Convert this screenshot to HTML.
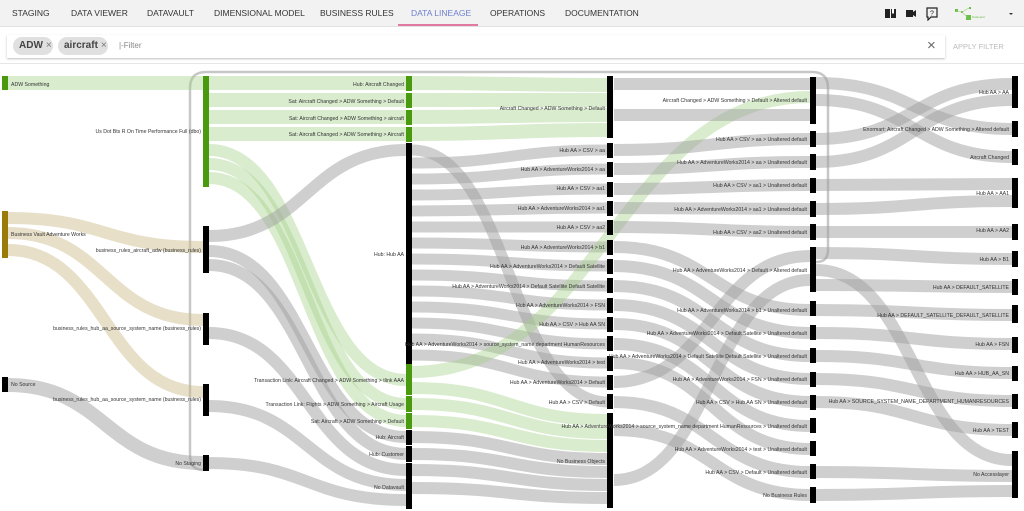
<!DOCTYPE html>
<html><head><meta charset="utf-8"><style>
body{margin:0;width:1024px;height:511px;overflow:hidden;background:#fff;font-family:"Liberation Sans",sans-serif;position:relative}
.nav{position:absolute;left:0;top:0;width:1024px;height:26px;background:#f2f2f2;border-bottom:1px solid #e2e2e2}
.nav span{position:absolute;top:8px;font-size:8.5px;color:#333;letter-spacing:0}
.fb{position:absolute;left:7px;top:35px;width:938px;height:23px;background:#fff;box-shadow:0 1px 2px rgba(0,0,0,.25)}
.chip{position:absolute;top:2px;height:18px;border-radius:9px;background:#e0e0e0;font-size:10px;font-weight:bold;color:#444;line-height:18px;padding-left:6px}
.chip i{font-style:normal;font-weight:normal;color:#777;margin-left:3px}
svg text{font-family:"Liberation Sans",sans-serif;font-size:5.2px;fill:#333}
.g{fill:none;stroke:#9f9f9f;stroke-opacity:.5}
.gr{fill:none;stroke:#9fd084;stroke-opacity:.4}
.ol{fill:none;stroke:#c9b884;stroke-opacity:.45}
</style></head><body>
<div class="nav">
<span style="left:12px">STAGING</span><span style="left:71px">DATA VIEWER</span><span style="left:147px">DATAVAULT</span><span style="left:214px">DIMENSIONAL MODEL</span><span style="left:320px">BUSINESS RULES</span><span style="left:411px;color:#6f7fcf">DATA LINEAGE</span><span style="left:490px">OPERATIONS</span><span style="left:565px">DOCUMENTATION</span>
<div style="position:absolute;left:398px;top:24px;width:80px;height:2px;background:#e07aa0"></div>
<svg style="position:absolute;left:884px;top:7px" width="130" height="14">
<path d="M1 2h5v9H1zM7 2h5v9H7z" fill="#222"/><path d="M8 1l2 0 0 6-1-1-1 1z" fill="#fff"/>
<rect x="22" y="3" width="7" height="7" fill="#222"/><path d="M29 5l3-2v7l-3-2z" fill="#222"/>
<path d="M43 1h10v9h-6l-3 3v-3h-1z" fill="none" stroke="#222" stroke-width="1.2"/><text x="46" y="8.5" style="font-size:7px;fill:#222">?</text>
<g fill="#6cc04a"><rect x="71" y="2" width="3" height="3"/><rect x="77" y="4" width="2" height="2"/><rect x="85" y="0" width="2" height="2"/><rect x="82" y="8" width="5" height="5"/></g>
<path d="M72 4l6 1 7-4M78 5l5 5" stroke="#9fd084" stroke-width=".6" fill="none"/>
<text x="88" y="11" style="font-size:3px;fill:#6cc04a">Datavault</text>
<path d="M125 6h4l-2 2z" fill="#333"/>
</svg>
</div>
<div class="fb">
<div class="chip" style="left:6px;width:34px">ADW<i>×</i></div>
<div class="chip" style="left:51px;width:44px">aircraft<i>×</i></div>
<span style="position:absolute;left:112px;top:6px;font-size:8px;color:#888">|-Filter</span>
<span style="position:absolute;left:920px;top:2px;font-size:15px;color:#666">×</span>
</div>
<span style="position:absolute;left:953px;top:42px;font-size:7.5px;color:#bbb">APPLY FILTER</span>
<div style="position:absolute;left:0;top:63px;width:1024px;height:1px;background:#e6e6e6"></div>
<svg style="position:absolute;left:0;top:0" width="1024" height="511">
<path d="M203 470 Q190 470 190 455 L190 88 Q190 72 206 72 L812 72 Q828 72 828 88 L828 250 Q828 262 816 262" fill="none" stroke="#999" stroke-width="2.5" stroke-opacity=".55"/>
<path class="gr" stroke-width="14" d="M8 83 L406 83"/>
<path class="ol" stroke-width="12" d="M8 218 C105 218 105 247 203 247"/>
<path class="ol" stroke-width="12" d="M8 233 C105 233 105 320 203 320"/>
<path class="ol" stroke-width="12" d="M8 250 C105 250 105 392 203 392"/>
<path class="g" stroke-width="14" d="M8 385 C105 385 105 463 203 463"/>
<path class="gr" stroke-width="14" d="M209 100 L406 100"/>
<path class="gr" stroke-width="14" d="M209 117 L406 117"/>
<path class="gr" stroke-width="14" d="M209 134 L406 134"/>
<path class="gr" stroke-width="12" d="M209 150 C307 150 307 380 406 380"/>
<path class="gr" stroke-width="12" d="M209 164 C307 164 307 404 406 404"/>
<path class="gr" stroke-width="12" d="M209 178 C307 178 307 421 406 421"/>
<path class="g" stroke-width="12" d="M209 236 C307 236 307 150 406 150"/>
<path class="g" stroke-width="12" d="M209 251 C307 251 307 437 406 437"/>
<path class="g" stroke-width="12" d="M209 265 C307 265 307 454 406 454"/>
<path class="g" stroke-width="12" d="M209 333 C307 333 307 470 406 470"/>
<path class="g" stroke-width="12" d="M209 406 C307 406 307 485 406 485"/>
<path class="g" stroke-width="12" d="M209 463 C307 463 307 500 406 500"/>
<path class="gr" stroke-width="14" d="M412 83 C510 83 510 85 608 85"/>
<path class="gr" stroke-width="14" d="M412 100 C510 100 510 100 608 100"/>
<path class="gr" stroke-width="14" d="M412 117 C510 117 510 115 608 115"/>
<path class="gr" stroke-width="14" d="M412 134 C510 134 510 130 608 130"/>
<path class="g" stroke-width="11" d="M412 163 C510 163 510 150 608 150"/>
<path class="g" stroke-width="11" d="M412 179 C510 179 510 169 608 169"/>
<path class="g" stroke-width="11" d="M412 195 C510 195 510 189 608 189"/>
<path class="g" stroke-width="11" d="M412 211 C510 211 510 208 608 208"/>
<path class="g" stroke-width="11" d="M412 227 C510 227 510 227 608 227"/>
<path class="g" stroke-width="11" d="M412 243 C510 243 510 247 608 247"/>
<path class="g" stroke-width="11" d="M412 259 C510 259 510 266 608 266"/>
<path class="g" stroke-width="11" d="M412 275 C510 275 510 286 608 286"/>
<path class="g" stroke-width="11" d="M412 291 C510 291 510 305 608 305"/>
<path class="g" stroke-width="11" d="M412 307 C510 307 510 324 608 324"/>
<path class="g" stroke-width="11" d="M412 323 C510 323 510 344 608 344"/>
<path class="g" stroke-width="11" d="M412 339 C510 339 510 363 608 363"/>
<path class="g" stroke-width="11" d="M412 355 C510 355 510 382 608 382"/>
<path class="g" stroke-width="11" d="M412 150 C510 150 510 402 608 402"/>
<path class="gr" stroke-width="12" d="M412 372 C600 372 620 97 810 97"/>
<path class="gr" stroke-width="12" d="M412 388 C510 388 510 420 608 420"/>
<path class="gr" stroke-width="12" d="M412 404 C510 404 510 433 608 433"/>
<path class="gr" stroke-width="12" d="M412 421 C510 421 510 446 608 446"/>
<path class="g" stroke-width="12" d="M412 437 C510 437 510 459 608 459"/>
<path class="g" stroke-width="12" d="M412 454 C510 454 510 472 608 472"/>
<path class="g" stroke-width="12" d="M412 470 C510 470 510 485 608 485"/>
<path class="g" stroke-width="12" d="M412 488 C510 488 510 498 608 498"/>
<path class="g" stroke-width="12" d="M614 84 L810 84"/>
<path class="g" stroke-width="12" d="M614 115 L810 115"/>
<path class="g" stroke-width="12" d="M614 150 C712 150 712 139 810 139"/>
<path class="g" stroke-width="12" d="M614 169 C712 169 712 162 810 162"/>
<path class="g" stroke-width="12" d="M614 189 C712 189 712 185 810 185"/>
<path class="g" stroke-width="12" d="M614 208 C712 208 712 209 810 209"/>
<path class="g" stroke-width="12" d="M614 227 C712 227 712 232 810 232"/>
<path class="g" stroke-width="12" d="M614 247 C712 247 712 310 810 310"/>
<path class="g" stroke-width="12" d="M614 266 C712 266 712 333 810 333"/>
<path class="g" stroke-width="12" d="M614 286 C712 286 712 356 810 356"/>
<path class="g" stroke-width="12" d="M614 305 C712 305 712 379 810 379"/>
<path class="g" stroke-width="12" d="M614 324 C712 324 712 402 810 402"/>
<path class="g" stroke-width="12" d="M614 344 C712 344 712 426 810 426"/>
<path class="g" stroke-width="12" d="M614 363 C712 363 712 449 810 449"/>
<path class="g" stroke-width="12" d="M614 382 C712 382 712 256 810 256"/>
<path class="g" stroke-width="12" d="M614 402 C712 402 712 472 810 472"/>
<path class="g" stroke-width="12" d="M614 430 C712 430 712 495 810 495"/>
<path class="g" stroke-width="12" d="M614 480 C712 480 712 280 810 280"/>
<path class="g" stroke-width="12" d="M816 83 C914 83 914 129 1012 129"/>
<path class="g" stroke-width="12" d="M816 100 C914 100 914 157 1012 157"/>
<path class="g" stroke-width="12" d="M816 139 C914 139 914 84 1012 84"/>
<path class="g" stroke-width="12" d="M816 162 C914 162 914 100 1012 100"/>
<path class="g" stroke-width="12" d="M816 185 C914 185 914 184 1012 184"/>
<path class="g" stroke-width="12" d="M816 209 C914 209 914 201 1012 201"/>
<path class="g" stroke-width="12" d="M816 232 C914 232 914 232 1012 232"/>
<path class="g" stroke-width="12" d="M816 253 C914 253 914 259 1012 259"/>
<path class="g" stroke-width="12" d="M816 270 C914 270 914 460 1012 460"/>
<path class="g" stroke-width="12" d="M816 285 C914 285 914 287 1012 287"/>
<path class="g" stroke-width="12" d="M816 310 C914 310 914 315 1012 315"/>
<path class="g" stroke-width="12" d="M816 333 C914 333 914 344 1012 344"/>
<path class="g" stroke-width="12" d="M816 356 C914 356 914 373 1012 373"/>
<path class="g" stroke-width="12" d="M816 379 C914 379 914 401 1012 401"/>
<path class="g" stroke-width="12" d="M816 402 C914 402 914 430 1012 430"/>
<path class="g" stroke-width="12" d="M816 472 C914 472 914 476 1012 476"/>
<path class="g" stroke-width="12" d="M816 495 C914 495 914 491 1012 491"/>
<g fill="#000">
<rect x="2" y="76" width="6" height="14" fill="#4a9a10"/>
<rect x="2" y="211" width="6" height="47" fill="#9a7a08"/>
<rect x="2" y="377" width="6" height="15"/>
<rect x="203" y="76" width="6" height="111" fill="#4a9a10"/>
<rect x="203" y="226" width="6" height="47"/>
<rect x="203" y="313" width="6" height="32"/>
<rect x="203" y="384" width="6" height="32"/>
<rect x="203" y="455" width="6" height="16"/>
<g fill="#4a9a10"><rect x="406" y="76" width="6" height="15"/><rect x="406" y="93" width="6" height="15"/><rect x="406" y="110" width="6" height="15"/><rect x="406" y="127" width="6" height="15"/>
<rect x="406" y="364" width="6" height="31"/><rect x="406" y="396" width="6" height="16"/><rect x="406" y="413" width="6" height="16"/></g>
<rect x="406" y="143" width="6" height="221"/>
<rect x="406" y="430" width="6" height="15"/><rect x="406" y="446" width="6" height="16"/><rect x="406" y="463" width="6" height="46"/>
<rect x="607" y="76" width="6" height="62"/>
<rect x="607" y="143" width="6" height="15"/><rect x="607" y="162" width="6" height="15"/><rect x="607" y="182" width="6" height="15"/><rect x="607" y="201" width="6" height="15"/><rect x="607" y="220" width="6" height="15"/><rect x="607" y="240" width="6" height="15"/><rect x="607" y="259" width="6" height="15"/><rect x="607" y="278" width="6" height="15"/><rect x="607" y="298" width="6" height="15"/><rect x="607" y="317" width="6" height="15"/><rect x="607" y="336" width="6" height="15"/><rect x="607" y="356" width="6" height="15"/><rect x="607" y="375" width="6" height="15"/><rect x="607" y="394" width="6" height="15"/><rect x="607" y="413" width="6" height="95"/>
<rect x="810" y="77" width="6" height="47"/><rect x="810" y="131" width="6" height="16"/><rect x="810" y="154" width="6" height="16"/><rect x="810" y="178" width="6" height="15"/><rect x="810" y="201" width="6" height="16"/><rect x="810" y="224" width="6" height="16"/><rect x="810" y="247" width="6" height="45"/><rect x="810" y="301" width="6" height="15"/><rect x="810" y="325" width="6" height="15"/><rect x="810" y="348" width="6" height="15"/><rect x="810" y="372" width="6" height="15"/><rect x="810" y="395" width="6" height="15"/><rect x="810" y="418" width="6" height="15"/><rect x="810" y="441" width="6" height="15"/><rect x="810" y="464" width="6" height="15"/><rect x="810" y="487" width="6" height="16"/>
<rect x="1012" y="76" width="6" height="32"/><rect x="1012" y="121" width="6" height="16"/><rect x="1012" y="149" width="6" height="16"/><rect x="1012" y="178" width="6" height="30"/><rect x="1012" y="224" width="6" height="16"/><rect x="1012" y="251" width="6" height="16"/><rect x="1012" y="279" width="6" height="16"/><rect x="1012" y="305" width="6" height="18"/><rect x="1012" y="337" width="6" height="16"/><rect x="1012" y="366" width="6" height="15"/><rect x="1012" y="394" width="6" height="15"/><rect x="1012" y="422" width="6" height="16"/><rect x="1012" y="451" width="6" height="47"/>
</g>
<text x="11" y="86">ADW Something</text>
<text x="11" y="236">Business Vault Adventure Works</text>
<text x="11" y="386">No Source</text>
<g text-anchor="end">
<text x="201" y="133">Us Dot Bts R On Time Performance Full (dbo)</text>
<text x="201" y="252">business_rules_aircraft_adw (business_rules)</text>
<text x="201" y="330">business_rules_hub_aa_source_system_name (business_rules)</text>
<text x="201" y="401">business_rules_hub_aa_source_system_name (business_rules)</text>
<text x="201" y="465">No Staging</text>
<text x="404" y="86">Hub: Aircraft Changed</text>
<text x="404" y="103">Sat: Aircraft Changed &gt; ADW Something &gt; Default</text>
<text x="404" y="120">Sat: Aircraft Changed &gt; ADW Something &gt; aircraft</text>
<text x="404" y="136">Sat: Aircraft Changed &gt; ADW Something &gt; Aircraft</text>
<text x="404" y="256">Hub: Hub AA</text>
<text x="404" y="382">Transaction Link: Aircraft Changed &gt; ADW Something &gt; tlink AAA</text>
<text x="404" y="406">Transaction Link: Flights &gt; ADW Something &gt; Aircraft Usage</text>
<text x="404" y="423">Sat: Aircraft &gt; ADW Something &gt; Default</text>
<text x="404" y="439">Hub: Aircraft</text>
<text x="404" y="456">Hub: Customer</text>
<text x="404" y="489">No Datavault</text>
<text x="605" y="110">Aircraft Changed &gt; ADW Something &gt; Default</text>
<text x="605" y="152">Hub AA &gt; CSV &gt; aa</text>
<text x="605" y="171">Hub AA &gt; AdventureWorks2014 &gt; aa</text>
<text x="605" y="190">Hub AA &gt; CSV &gt; aa1</text>
<text x="605" y="210">Hub AA &gt; AdventureWorks2014 &gt; aa1</text>
<text x="605" y="229">Hub AA &gt; CSV &gt; aa2</text>
<text x="605" y="249">Hub AA &gt; AdventureWorks2014 &gt; b1</text>
<text x="605" y="268">Hub AA &gt; AdventureWorks2014 &gt; Default Satellite</text>
<text x="605" y="288">Hub AA &gt; AdventureWorks2014 &gt; Default Satellite Default Satellite</text>
<text x="605" y="307">Hub AA &gt; AdventureWorks2014 &gt; FSN</text>
<text x="605" y="326">Hub AA &gt; CSV &gt; Hub AA SN</text>
<text x="605" y="346">Hub AA &gt; AdventureWorks2014 &gt; source_system_name department HumanResources</text>
<text x="605" y="364">Hub AA &gt; AdventureWorks2014 &gt; test</text>
<text x="605" y="384">Hub AA &gt; AdventureWorks2014 &gt; Default</text>
<text x="605" y="404">Hub AA &gt; CSV &gt; Default</text>
<text x="605" y="463">No Business Objects</text>
<text x="807" y="102">Aircraft Changed &gt; ADW Something &gt; Default &gt; Altered default</text>
<text x="807" y="141">Hub AA &gt; CSV &gt; aa &gt; Unaltered default</text>
<text x="807" y="164">Hub AA &gt; AdventureWorks2014 &gt; aa &gt; Unaltered default</text>
<text x="807" y="187">Hub AA &gt; CSV &gt; aa1 &gt; Unaltered default</text>
<text x="807" y="211">Hub AA &gt; AdventureWorks2014 &gt; aa1 &gt; Unaltered default</text>
<text x="807" y="234">Hub AA &gt; CSV &gt; aa2 &gt; Unaltered default</text>
<text x="807" y="272">Hub AA &gt; AdventureWorks2014 &gt; Default &gt; Altered default</text>
<text x="807" y="312">Hub AA &gt; AdventureWorks2014 &gt; b1 &gt; Unaltered default</text>
<text x="807" y="335">Hub AA &gt; AdventureWorks2014 &gt; Default Satellite &gt; Unaltered default</text>
<text x="807" y="358">Hub AA &gt; AdventureWorks2014 &gt; Default Satellite Default Satellite &gt; Unaltered default</text>
<text x="807" y="381">Hub AA &gt; AdventureWorks2014 &gt; FSN &gt; Unaltered default</text>
<text x="807" y="404">Hub AA &gt; CSV &gt; Hub AA SN &gt; Unaltered default</text>
<text x="807" y="428">Hub AA &gt; AdventureWorks2014 &gt; source_system_name department HumanResources &gt; Unaltered default</text>
<text x="807" y="451">Hub AA &gt; AdventureWorks2014 &gt; test &gt; Unaltered default</text>
<text x="807" y="474">Hub AA &gt; CSV &gt; Default &gt; Unaltered default</text>
<text x="807" y="497">No Business Rules</text>
<text x="1009" y="94">Hub AA &gt; AA</text>
<text x="1009" y="131">Enormart: Aircraft Changed &gt; ADW Something &gt; Altered default</text>
<text x="1009" y="159">Aircraft Changed</text>
<text x="1009" y="195">Hub AA &gt; AA1</text>
<text x="1009" y="232">Hub AA &gt; AA2</text>
<text x="1009" y="261">Hub AA &gt; B1</text>
<text x="1009" y="289">Hub AA &gt; DEFAULT_SATELLITE</text>
<text x="1009" y="317">Hub AA &gt; DEFAULT_SATELLITE_DEFAULT_SATELLITE</text>
<text x="1009" y="346">Hub AA &gt; FSN</text>
<text x="1009" y="375">Hub AA &gt; HUB_AA_SN</text>
<text x="1009" y="403">Hub AA &gt; SOURCE_SYSTEM_NAME_DEPARTMENT_HUMANRESOURCES</text>
<text x="1009" y="432">Hub AA &gt; TEST</text>
<text x="1009" y="476">No Accesslayer</text>
</g>
</svg>
</body></html>
